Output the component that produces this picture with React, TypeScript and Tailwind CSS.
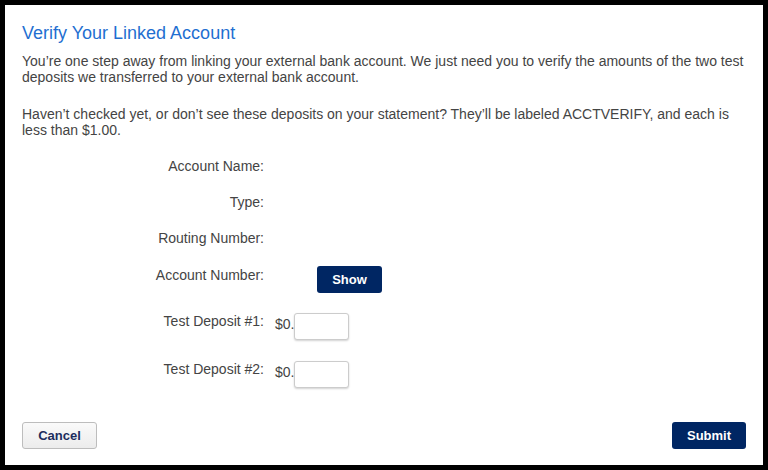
import React from "react";

const font = { fontFamily: '"Liberation Sans", Arial, sans-serif' };

function Label({ children }: { children: React.ReactNode }) {
  return (
    <div className="w-[242px] shrink-0 text-right text-[14px] leading-[16px] text-[#444444]">
      {children}
    </div>
  );
}

function DepositInput() {
  return (
    <div className="ml-[11px] flex items-start">
      <span className="pt-[3px] text-[14px] leading-[16px] text-[#444444]">$0.</span>
      <input
        type="text"
        className="h-[27px] w-[55px] rounded-[3px] border border-[#cccccc] bg-white shadow-[0_1px_2px_rgba(0,0,0,0.18)] outline-none"
      />
    </div>
  );
}

export default function App() {
  return (
    <div className="h-[470px] w-[768px] bg-black p-[5px]" style={font}>
      <div className="flex h-full flex-col bg-white px-[17px] pt-[17px] pb-[16px]">
        <h1 className="text-[18px] leading-[22px] font-normal text-[#1f6fd1]">
          Verify Your Linked Account
        </h1>
        <p className="mt-[9px] text-[14px] leading-[16px] text-[#444444]">
          You’re one step away from linking your external bank account. We just need you to verify the amounts of the two test deposits we transferred to your external bank account.
        </p>
        <p className="mt-[21px] text-[14px] leading-[16px] text-[#444444]">
          Haven’t checked yet, or don’t see these deposits on your statement? They’ll be labeled ACCTVERIFY, and each is less than $1.00.
        </p>

        <div className="mt-[20px] flex flex-col">
          <div className="flex h-[36px] items-start">
            <Label>Account Name:</Label>
          </div>
          <div className="flex h-[36px] items-start">
            <Label>Type:</Label>
          </div>
          <div className="flex h-[37px] items-start">
            <Label>Routing Number:</Label>
          </div>
          <div className="flex h-[46px] items-start">
            <Label>Account Number:</Label>
            <button className="ml-[53px] mt-[-1px] h-[27px] w-[65px] rounded-[3px] bg-[#002663] text-[13px] font-bold text-white">
              Show
            </button>
          </div>
          <div className="flex h-[48px] items-start">
            <Label>Test Deposit #1:</Label>
            <DepositInput />
          </div>
          <div className="flex items-start">
            <Label>Test Deposit #2:</Label>
            <div className="mt-[0px]">
              <DepositInput />
            </div>
          </div>
        </div>

        <div className="mt-auto flex items-center justify-between">
          <button className="h-[27px] w-[75px] rounded-[3px] border border-[#bdbdbd] bg-gradient-to-b from-[#fafafa] to-[#ececec] text-[13px] font-bold text-[#1c2d5e]">
            Cancel
          </button>
          <button className="h-[27px] w-[74px] rounded-[3px] bg-[#002663] text-[13px] font-bold text-white">
            Submit
          </button>
        </div>
      </div>
    </div>
  );
}
